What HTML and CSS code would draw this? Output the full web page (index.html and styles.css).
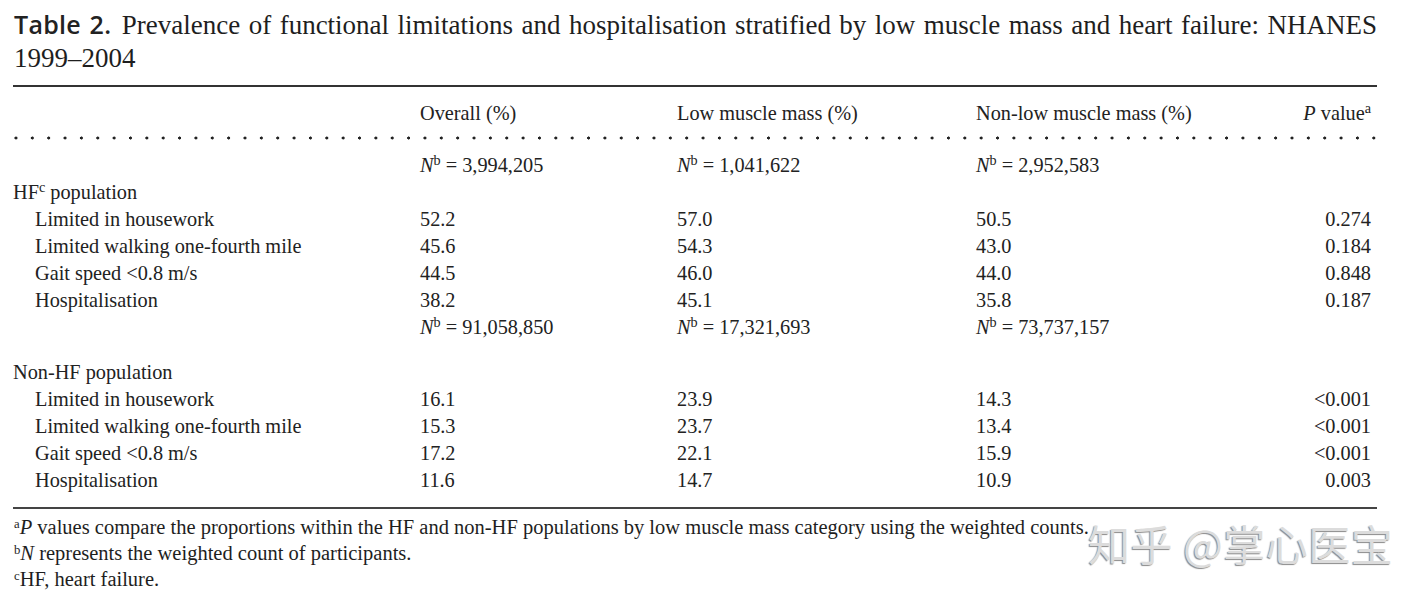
FILE: index.html
```html
<!DOCTYPE html>
<html>
<head>
<meta charset="utf-8">
<link rel="stylesheet" href="styles.css">
</head>
<body>
<div class="page">
  <h1 class="title"><span class="label">Table 2.</span> Prevalence of functional limitations and hospitalisation stratified by low muscle mass and heart failure: NHANES 1999–2004</h1>
  <div class="table">
    <div class="row head">
      <div class="c0"></div>
      <div class="c1">Overall (%)</div>
      <div class="c2">Low muscle mass (%)</div>
      <div class="c3">Non-low muscle mass (%)</div>
      <div class="c4"><i>P</i> value<sup>a</sup></div>
    </div>
    <div class="dots"></div>
    <div class="row">
      <div class="c0"></div>
      <div class="c1"><i>N</i><sup>b</sup> = 3,994,205</div>
      <div class="c2"><i>N</i><sup>b</sup> = 1,041,622</div>
      <div class="c3"><i>N</i><sup>b</sup> = 2,952,583</div>
      <div class="c4"></div>
    </div>
    <div class="row">
      <div class="c0">HF<sup>c</sup> population</div>
      <div class="c1"></div><div class="c2"></div><div class="c3"></div><div class="c4"></div>
    </div>
    <div class="row">
      <div class="c0 ind">Limited in housework</div>
      <div class="c1">52.2</div><div class="c2">57.0</div><div class="c3">50.5</div><div class="c4">0.274</div>
    </div>
    <div class="row">
      <div class="c0 ind">Limited walking one-fourth mile</div>
      <div class="c1">45.6</div><div class="c2">54.3</div><div class="c3">43.0</div><div class="c4">0.184</div>
    </div>
    <div class="row">
      <div class="c0 ind">Gait speed &lt;0.8 m/s</div>
      <div class="c1">44.5</div><div class="c2">46.0</div><div class="c3">44.0</div><div class="c4">0.848</div>
    </div>
    <div class="row">
      <div class="c0 ind">Hospitalisation</div>
      <div class="c1">38.2</div><div class="c2">45.1</div><div class="c3">35.8</div><div class="c4">0.187</div>
    </div>
    <div class="row">
      <div class="c0"></div>
      <div class="c1"><i>N</i><sup>b</sup> = 91,058,850</div>
      <div class="c2"><i>N</i><sup>b</sup> = 17,321,693</div>
      <div class="c3"><i>N</i><sup>b</sup> = 73,737,157</div>
      <div class="c4"></div>
    </div>
    <div class="row gap">
      <div class="c0">Non-HF population</div>
      <div class="c1"></div><div class="c2"></div><div class="c3"></div><div class="c4"></div>
    </div>
    <div class="row">
      <div class="c0 ind">Limited in housework</div>
      <div class="c1">16.1</div><div class="c2">23.9</div><div class="c3">14.3</div><div class="c4">&lt;0.001</div>
    </div>
    <div class="row">
      <div class="c0 ind">Limited walking one-fourth mile</div>
      <div class="c1">15.3</div><div class="c2">23.7</div><div class="c3">13.4</div><div class="c4">&lt;0.001</div>
    </div>
    <div class="row">
      <div class="c0 ind">Gait speed &lt;0.8 m/s</div>
      <div class="c1">17.2</div><div class="c2">22.1</div><div class="c3">15.9</div><div class="c4">&lt;0.001</div>
    </div>
    <div class="row last">
      <div class="c0 ind">Hospitalisation</div>
      <div class="c1">11.6</div><div class="c2">14.7</div><div class="c3">10.9</div><div class="c4">0.003</div>
    </div>
  </div>
  <div class="notes">
    <p><sup>a</sup><i>P</i> values compare the proportions within the HF and non-HF populations by low muscle mass category using the weighted counts.</p>
    <p><sup>b</sup><i>N</i> represents the weighted count of participants.</p>
    <p><sup>c</sup>HF, heart failure.</p>
  </div>
  <div class="watermark">知乎 @掌心医宝</div>
</div>
</body>
</html>
```

FILE: styles.css
```css
html, body {
  margin: 0;
  padding: 0;
  background: #fff;
}
.page {
  position: relative;
  width: 1364px;
  padding: 8px 0 0 13px;
  font-family: "Liberation Serif", "Times New Roman", serif;
  color: #222;
}
.title {
  margin: 0 0 0 1px;
  font-size: 27px;
  line-height: 33px;
  font-weight: normal;
  text-align: justify;
  text-align-last: left;
  color: #1e1e1e;
}
.title .label {
  font-family: "Open Sans", "Liberation Sans", sans-serif;
  font-size: 25px;
  font-weight: 600;
  letter-spacing: 0.3px;
  margin-right: 2px;
  color: #222;
}
.table {
  margin-top: 10px;
  border-top: 2px solid #333;
  border-bottom: 2px solid #444;
  font-size: 20.3px;
}
.row {
  display: grid;
  grid-template-columns: 407px 257px 299px 1fr 1fr;
  height: 27px;
  line-height: 27px;
  white-space: nowrap;
}
.row .c4 {
  text-align: right;
  padding-right: 6px;
}
.row.head {
  margin-top: 13px;
}
.row.gap {
  margin-top: 18px;
}
.row.last {
  margin-bottom: 13px;
}
.c0.ind {
  padding-left: 22px;
}
sup {
  font-size: 0.7em;
  line-height: 0;
  vertical-align: 0.5em;
}
.dots {
  height: 4px;
  margin: 9px 0 12px 0;
  background-image: radial-gradient(circle at 1.5px 2px, #222 1.3px, transparent 1.8px);
  background-size: 16.36px 4px;
  background-position: 1.5px 0;
  background-repeat: repeat-x;
}
.notes {
  margin-top: 5px;
  font-size: 20.5px;
  color: #1e1e1e;
}
.notes p {
  margin: 0;
  height: 26px;
  line-height: 26px;
  padding-left: 1px;
  white-space: nowrap;
}
.notes sup {
  font-size: 0.62em;
}
.watermark {
  position: absolute;
  left: 1088px;
  top: 515px;
  font-family: "Noto Sans CJK SC", sans-serif;
  font-size: 42px;
  line-height: 56px;
  letter-spacing: 0.5px;
  color: #dcdcdc;
  text-shadow: -1px 1px 1px #8a8a8a;
  white-space: nowrap;
}
```
